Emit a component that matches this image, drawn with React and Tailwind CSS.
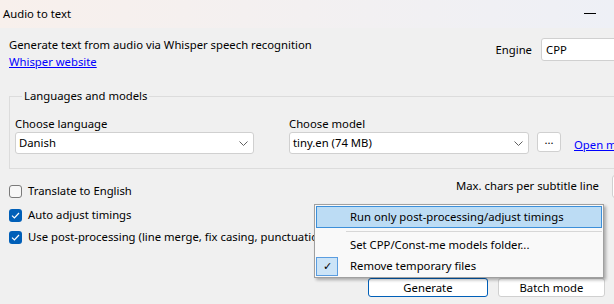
import React from "react";

function Check() {
  return (
    <svg width="9" height="7" viewBox="0 0 9 7" fill="none">
      <path d="M1 3.6 L3.4 6 L8 1" stroke="#fff" strokeWidth="1.2" />
    </svg>
  );
}

function Checkbox({ checked, label }) {
  return (
    <div className="flex items-center h-[16px]">
      {checked ? (
        <div className="w-[13px] h-[13px] rounded-[3px] bg-[#005fb8] flex items-center justify-center">
          <Check />
        </div>
      ) : (
        <div className="w-[13px] h-[13px] rounded-[3px] border border-[#7a7a7a] bg-[#f7f7f7]" />
      )}
      <span className="ml-[6px] whitespace-nowrap">{label}</span>
    </div>
  );
}

function Chevron() {
  return (
    <svg width="9" height="5" viewBox="0 0 9 5" fill="none">
      <path d="M0.5 0.5 L4.5 4.5 L8.5 0.5" stroke="#606060" strokeWidth="1" />
    </svg>
  );
}

function Dropdown({ value, width }) {
  return (
    <div
      className={`h-[22px] bg-white border border-[#d0d0d0] rounded-[3px] flex items-center justify-between pl-[3px] pr-[5px] ${width}`}
    >
      <span>{value}</span>
      <Chevron />
    </div>
  );
}

export default function App() {
  return (
    <div
      className="relative w-[614px] h-[304px] overflow-hidden bg-[#f0f0f0] text-[11.3px] leading-[16px] text-black"
      style={{ fontFamily: '"Noto Sans", "Open Sans", sans-serif' }}
    >
      {/* title bar */}
      <div className="h-[28px] flex items-center justify-between bg-gradient-to-r from-[#f8f0ec] to-[#eef0f6] pl-[3px]">
        <span>Audio to text</span>
        <div className="w-[12px] h-px bg-black mr-[18px] -mt-[2px]" />
      </div>

      <div className="px-[9px] pt-[9px]">
        {/* header */}
        <div className="flex justify-between">
          <div>
            <div className="whitespace-nowrap">Generate text from audio via Whisper speech recognition</div>
            <div className="mt-px text-[#0000ff] underline">Whisper website</div>
          </div>
          <div className="flex items-center mt-px -mr-[56px] h-[23px]">
            <span>Engine</span>
            <div className="ml-[9px] w-[120px] h-[23px] bg-white border border-[#d0d0d0] rounded-[3px] flex items-center pl-[4px]">
              CPP
            </div>
          </div>
        </div>

        {/* group box */}
        <fieldset className="mt-[18px] w-[700px] border border-[#dcdcdc] pl-[5px] pb-[14px]">
          <legend className="ml-[7px] px-[2px]">Languages and models</legend>
          <div className="flex items-start pt-[12px] h-[50px]">
            <div>
              <div>Choose language</div>
              <Dropdown value="Danish" width="w-[239px]" />
            </div>
            <div className="ml-[35px]">
              <div>Choose model</div>
              <Dropdown value="tiny.en (74 MB)" width="w-[240px]" />
            </div>
            <div className="ml-[8px] mt-[16px] w-[24px] h-[20px] bg-white border border-[#d0d0d0] rounded-[3px] flex items-center justify-center leading-none pb-[4px]">
              ...
            </div>
            <div className="ml-[13px] mt-[21px] text-[#0000ff] underline whitespace-nowrap">
              Open models folder
            </div>
          </div>
        </fieldset>

        {/* options */}
        <div className="mt-[14px] flex justify-between">
          <Checkbox checked={false} label="Translate to English" />
          <div className="flex items-center -mt-[10px] -mr-[47px]">
            <span className="whitespace-nowrap">Max. chars per subtitle line</span>
            <div className="ml-[13px] w-[40px] h-[23px] bg-white border border-[#d0d0d0] rounded-[3px]" />
          </div>
        </div>
        <div className="mt-[8px]">
          <Checkbox checked label="Auto adjust timings" />
        </div>
        <div className="mt-[6px]">
          <Checkbox checked label="Use post-processing (line merge, fix casing, punctuation, and more)" />
        </div>

        {/* buttons */}
        <div className="mt-[33px] ml-[359px] flex gap-[10px]">
          <div className="w-[122px] h-[19px] bg-white border border-[#005fb8] rounded-[3px] flex items-center justify-center">
            Generate
          </div>
          <div className="w-[109px] h-[19px] bg-white border border-[#d0d0d0] rounded-[3px] flex items-center justify-center">
            Batch mode
          </div>
        </div>
      </div>

      {/* context menu */}
      <div className="absolute left-[314px] top-[204px] w-[290px] h-[74px] bg-[#f9f9f9] border border-[#a0a0a0] shadow-[2px_2px_3px_rgba(0,0,0,0.3)] p-px">
        <div className="h-[22px] bg-[#bcdcf4] border border-[#3c8fd9] flex items-center pl-[33px]">
          Run only post-processing/adjust timings
        </div>
        <div className="ml-[30px] mt-[3px] h-px bg-[#d7d7d7]" />
        <div className="h-[22px] mt-[2px] flex items-center pl-[34px]">Set CPP/Const-me models folder...</div>
        <div className="h-[20px] flex items-center">
          <div className="w-[22px] h-[19px] bg-[#cce4f7] border border-[#5a9de0] flex items-center justify-center text-[11px]">
            ✓
          </div>
          <span className="ml-[12px]">Remove temporary files</span>
        </div>
      </div>
    </div>
  );
}
